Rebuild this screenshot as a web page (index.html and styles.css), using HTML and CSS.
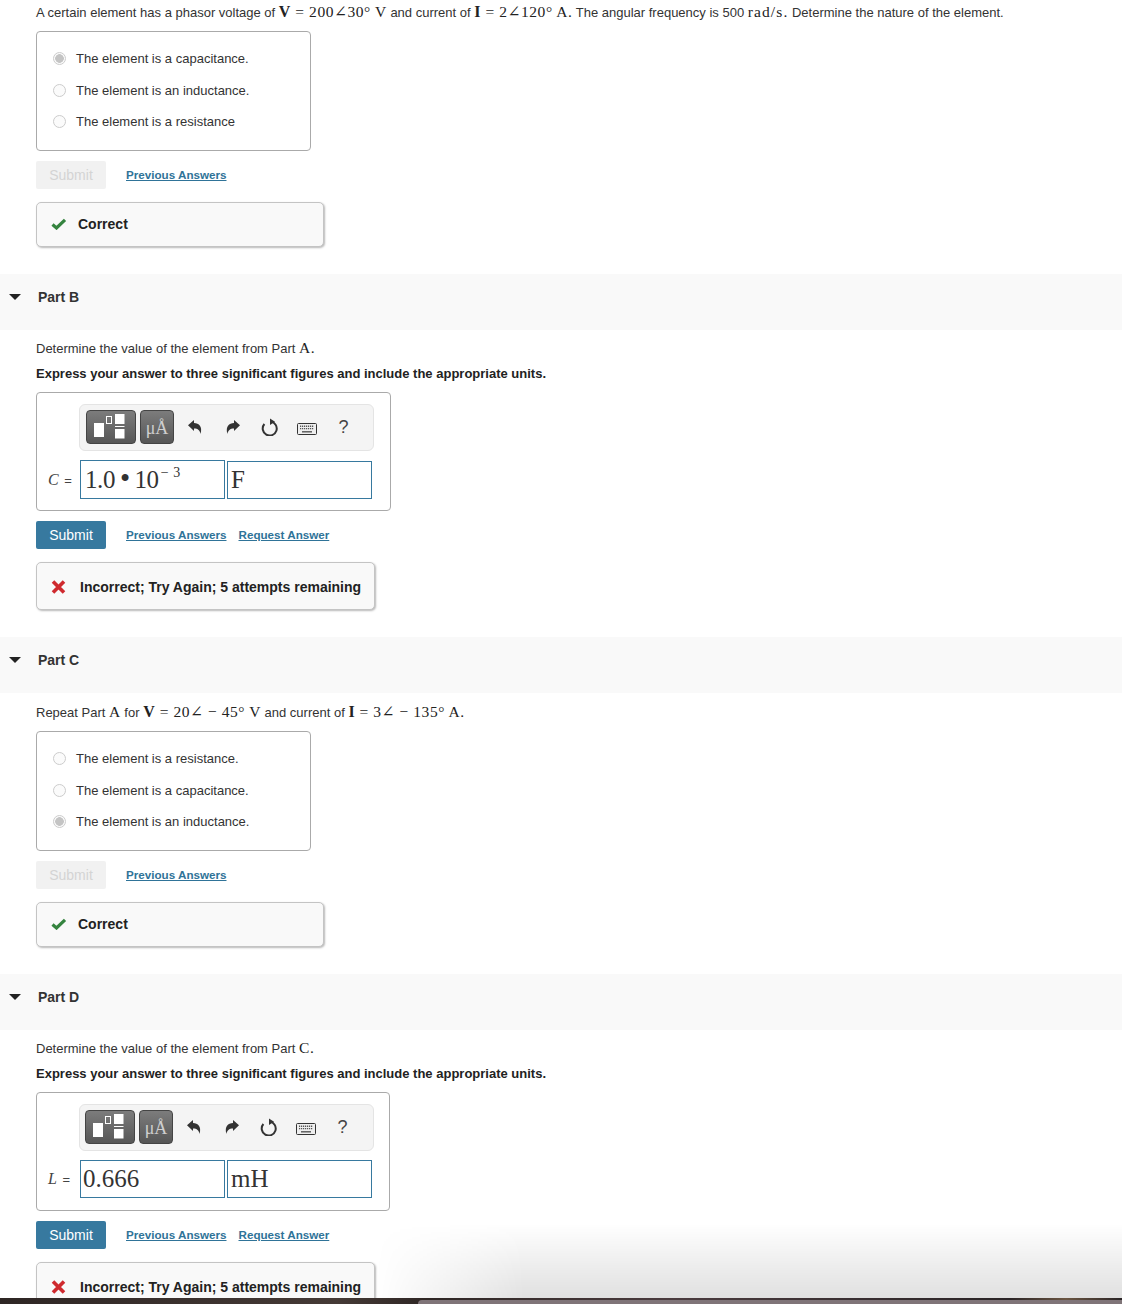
FILE: index.html
```html
<!DOCTYPE html>
<html lang="en">
<head>
<meta charset="utf-8">
<title>Phasor element problem</title>
<link rel="stylesheet" href="styles.css">
</head>
<body>
<div class="shade"></div>
<main class="page">
  <p class="intro">A certain element has a phasor voltage of <span class="m"><b>V</b> = 200∠30° V</span> and current of <span class="m"><b>I</b> = 2∠120° A.</span> The angular frequency is 500 <span class="m wide">rad/s.</span> Determine the nature of the element.</p>
  <div class="choices">
    <label class="opt"><span class="radio on"></span>The element is a capacitance.</label>
    <label class="opt"><span class="radio"></span>The element is an inductance.</label>
    <label class="opt"><span class="radio"></span>The element is a resistance</label>
  </div>
  <div class="actions">
    <span class="btn off">Submit</span>
    <a class="link" href="#">Previous Answers</a>
  </div>
  <div class="fb ok">
    <svg class="ico" width="16" height="12" viewBox="0 0 16 12"><path d="M1.5 6.5 L5.5 10 L14 1.8" fill="none" stroke="#35843f" stroke-width="3.2"/></svg>
    <span>Correct</span>
  </div>

  <section class="part"><svg class="caret" width="12" height="6" viewBox="0 0 12 6"><path d="M0 0H12L6 6Z" fill="#222"/></svg><h2>Part B</h2></section>
  <p class="q">Determine the value of the element from Part <span class="m">A.</span></p>
  <p class="q bold">Express your answer to three significant figures and include the appropriate units.</p>
  <div class="answer">
    <div class="tools">
      <span class="tb tmpl"><svg width="50" height="34" viewBox="0 0 50 34"><rect x="8" y="13" width="10" height="14" fill="#fff"/><rect x="20.5" y="6.5" width="5" height="7" fill="none" stroke="#fff"/><rect x="29" y="4" width="9.5" height="10" fill="#fff"/><rect x="29" y="16" width="9.5" height="1" fill="#fff"/><rect x="29" y="19" width="9.5" height="9.5" fill="#fff"/></svg></span>
      <span class="tb unit">μÅ</span>
      <span class="cell c38"><svg width="16" height="16" viewBox="0 0 16 16"><path d="M1 6.3 L7 1 V4 C12 4 15.6 7.5 13.6 15 C13 11.5 11 9.5 7 9.5 V12 Z" fill="#333"/></svg></span>
      <span class="cell c38"><svg width="16" height="16" viewBox="0 0 16 16"><path d="M15 6.3 L9 1 V4 C4 4 .4 7.5 2.4 15 C3 11.5 5 9.5 9 9.5 V12 Z" fill="#333"/></svg></span>
      <span class="cell c36"><svg width="18" height="18" viewBox="0 0 18 18"><path d="M3.4 6 A7 7 0 1 0 9.5 3.6" fill="none" stroke="#333" stroke-width="2"/><path d="M9 .5 L14 3.7 L9 7 Z" fill="#333"/></svg></span>
      <span class="cell c37"><svg class="kbd" width="20" height="12" viewBox="0 0 20 12"><rect x=".5" y=".5" width="19" height="11" rx="1" fill="#eee" stroke="#333"/><path d="M3 3.2H17M3 5.6H17" stroke="#555" stroke-width="1.4" stroke-dasharray="1.2 .8"/><path d="M5 8.8H15" stroke="#555" stroke-width="1.4"/></svg></span>
      <span class="cell c37 help">?</span>
    </div>
    <div class="inrow">
      <span class="sym"><i>C</i> =</span>
      <span class="field tall">1.0 <span class="dot">•</span> 10<sup>− 3</sup></span>
      <span class="field unitf">F</span>
    </div>
  </div>
  <div class="actions">
    <span class="btn">Submit</span>
    <a class="link" href="#">Previous Answers</a>
    <a class="link" href="#">Request Answer</a>
  </div>
  <div class="fb bad">
    <svg class="ico" width="15" height="14" viewBox="0 0 15 14"><path d="M2 1.5 L13 12.5 M13 1.5 L2 12.5" fill="none" stroke="#cf2a2f" stroke-width="3.6"/></svg>
    <span>Incorrect; Try Again; 5 attempts remaining</span>
  </div>

  <section class="part"><svg class="caret" width="12" height="6" viewBox="0 0 12 6"><path d="M0 0H12L6 6Z" fill="#222"/></svg><h2>Part C</h2></section>
  <p class="q repeat">Repeat Part <span class="m">A</span> for <span class="m"><b>V</b> = 20∠ − 45° V</span> and current of <span class="m"><b>I</b> = 3∠ − 135° A.</span></p>
  <div class="choices">
    <label class="opt"><span class="radio"></span>The element is a resistance.</label>
    <label class="opt"><span class="radio"></span>The element is a capacitance.</label>
    <label class="opt"><span class="radio on"></span>The element is an inductance.</label>
  </div>
  <div class="actions">
    <span class="btn off">Submit</span>
    <a class="link" href="#">Previous Answers</a>
  </div>
  <div class="fb ok">
    <svg class="ico" width="16" height="12" viewBox="0 0 16 12"><path d="M1.5 6.5 L5.5 10 L14 1.8" fill="none" stroke="#35843f" stroke-width="3.2"/></svg>
    <span>Correct</span>
  </div>

  <section class="part"><svg class="caret" width="12" height="6" viewBox="0 0 12 6"><path d="M0 0H12L6 6Z" fill="#222"/></svg><h2>Part D</h2></section>
  <p class="q">Determine the value of the element from Part <span class="m">C.</span></p>
  <p class="q bold">Express your answer to three significant figures and include the appropriate units.</p>
  <div class="answer narrow">
    <div class="tools">
      <span class="tb tmpl"><svg width="50" height="34" viewBox="0 0 50 34"><rect x="8" y="13" width="10" height="14" fill="#fff"/><rect x="20.5" y="6.5" width="5" height="7" fill="none" stroke="#fff"/><rect x="29" y="4" width="9.5" height="10" fill="#fff"/><rect x="29" y="16" width="9.5" height="1" fill="#fff"/><rect x="29" y="19" width="9.5" height="9.5" fill="#fff"/></svg></span>
      <span class="tb unit">μÅ</span>
      <span class="cell c38"><svg width="16" height="16" viewBox="0 0 16 16"><path d="M1 6.3 L7 1 V4 C12 4 15.6 7.5 13.6 15 C13 11.5 11 9.5 7 9.5 V12 Z" fill="#333"/></svg></span>
      <span class="cell c38"><svg width="16" height="16" viewBox="0 0 16 16"><path d="M15 6.3 L9 1 V4 C4 4 .4 7.5 2.4 15 C3 11.5 5 9.5 9 9.5 V12 Z" fill="#333"/></svg></span>
      <span class="cell c36"><svg width="18" height="18" viewBox="0 0 18 18"><path d="M3.4 6 A7 7 0 1 0 9.5 3.6" fill="none" stroke="#333" stroke-width="2"/><path d="M9 .5 L14 3.7 L9 7 Z" fill="#333"/></svg></span>
      <span class="cell c37"><svg class="kbd" width="20" height="12" viewBox="0 0 20 12"><rect x=".5" y=".5" width="19" height="11" rx="1" fill="#eee" stroke="#333"/><path d="M3 3.2H17M3 5.6H17" stroke="#555" stroke-width="1.4" stroke-dasharray="1.2 .8"/><path d="M5 8.8H15" stroke="#555" stroke-width="1.4"/></svg></span>
      <span class="cell c37 help">?</span>
    </div>
    <div class="inrow">
      <span class="sym"><i>L</i> =</span>
      <span class="field">0.666</span>
      <span class="field unitf">mH</span>
    </div>
  </div>
  <div class="actions">
    <span class="btn">Submit</span>
    <a class="link" href="#">Previous Answers</a>
    <a class="link" href="#">Request Answer</a>
  </div>
  <div class="fb bad">
    <svg class="ico" width="15" height="14" viewBox="0 0 15 14"><path d="M2 1.5 L13 12.5 M13 1.5 L2 12.5" fill="none" stroke="#cf2a2f" stroke-width="3.6"/></svg>
    <span>Incorrect; Try Again; 5 attempts remaining</span>
  </div>
</main>
<div class="desk"><div class="win"></div></div>
</body>
</html>
```
FILE: styles.css
```css
* { box-sizing: border-box; }
html, body { margin: 0; padding: 0; height: 1304px; overflow: hidden; background: #fff; }
body { position: relative; font-family: "Liberation Sans", Arial, sans-serif; font-size: 13px; color: #333; }
.page { position: relative; }
p { margin: 0; }
.intro { height: 24px; line-height: 23px; padding-left: 36px; white-space: nowrap; }
.m { font-family: "Liberation Serif", "DejaVu Serif", serif; font-size: 15.5px; letter-spacing: .55px; color: #222; }
.m.wide { letter-spacing: 1.1px; }
.m b { font-size: 16px; }
.choices { width: 275px; height: 120px; margin: 7px 0 0 36px; padding: 11px 0 0 16px; border: 1px solid #aaa; border-radius: 4px; background: #fff; }
.repeat + .choices { margin-top: 9px; }
.opt { display: flex; align-items: center; height: 31.5px; gap: 10px; white-space: nowrap; }
.radio { width: 13px; height: 13px; border-radius: 50%; border: 1px solid #ccc; background: #fbfbfb; flex: none; }
.radio.on { background: #fbfbfb radial-gradient(circle, #c4c4c4 0, #c4c4c4 4px, transparent 4.6px); }
.actions { display: flex; align-items: center; height: 28px; margin: 10px 0 0 36px; gap: 12px; }
.btn { width: 70px; height: 28px; margin-right: 8px; line-height: 28px; text-align: center; font-size: 14px; color: #fff; background: #37799f; border-radius: 2px; }
.btn.off { color: #d4d4d4; background: #f1f1f1; }
.link { padding-bottom: 2px; font-size: 11.65px; font-weight: 700; color: #2f7398; text-decoration: underline; }
.fb { display: flex; align-items: center; margin: 13px 0 0 36px; background: #f9f9f9; border: 1px solid #c4c4c4; border-radius: 5px; box-shadow: 1px 1px 2px rgba(0,0,0,.28); font-size: 14px; font-weight: 700; color: #222; }
.ok { width: 288px; height: 45px; padding: 0 0 1px 14px; gap: 11px; }
.bad { width: 339px; height: 48px; padding: 1px 0 0 14px; gap: 14px; }
.part { display: flex; align-items: center; height: 56px; margin-top: 27px; padding: 0 0 10px 9px; background: #f9f9f9; }
.caret { margin-right: 17px; margin-top: -1px; }
h2 { margin: 0; font-size: 14px; font-weight: 700; color: #333; }
.q { height: 20px; line-height: 20px; margin: 8px 0 0 36px; white-space: nowrap; }
.q.bold { margin-top: 5px; line-height: 22px; font-weight: 700; color: #222; }
.q.repeat { margin-top: 9px; }
.answer { width: 355px; height: 119px; margin: 9px 0 0 36px; padding: 11px 0 0 42px; border: 1px solid #aaa; border-radius: 4px; }
.answer.narrow { width: 354px; }
.tools { display: flex; align-items: center; width: 295px; height: 47px; padding: 0 0 2px 6px; background: #f4f4f4; border: 1px solid #e4e4e4; border-radius: 6px; }
.narrow .tools { padding-left: 5px; }
.tb { display: block; height: 34px; border: 1px solid #444; border-radius: 4px; background: linear-gradient(#7c7c7c, #565656); flex: none; }
.tmpl { width: 50px; }
.tmpl svg { display: block; margin: -1px; }
.unit { width: 34px; margin-left: 4px; line-height: 34px; text-align: center; font-family: "Liberation Serif", serif; font-size: 18px; color: #cfcfcf; }
.cell { display: flex; align-items: center; justify-content: center; height: 34px; flex: none; }
.c38 { width: 38px; }
.c36 { width: 36px; }
.c37 { width: 37px; }
.unit + .c38 { margin-left: 2px; }
.kbd { margin-top: 4px; }
.help { padding-top: 2px; font-family: "Liberation Sans", sans-serif; font-size: 18px; color: #444; }
.inrow { display: flex; align-items: flex-end; margin: 9px 0 0 -31px; height: 39px; }
.narrow .inrow { height: 38px; }
.sym { width: 32px; align-self: center; font-size: 13px; color: #444; white-space: nowrap; word-spacing: 2px; }
.sym i { font-family: "Liberation Serif", serif; font-size: 16px; }
.field { display: block; width: 145px; height: 38px; line-height: 36px; padding-left: 2px; border: 1px solid #37799f; font-family: "Liberation Serif", serif; font-size: 25px; color: #333; white-space: nowrap; }
.field.tall { height: 39px; line-height: 38px; padding-left: 4px; letter-spacing: -.4px; word-spacing: -1px; }
.dot { font-size: 29px; line-height: 0; }
.unitf { margin-left: 2px; padding-left: 3px; }
.field sup { font-size: 14px; line-height: 0; margin-left: 2px; position: relative; top: -2px; letter-spacing: 0; word-spacing: 1px; }
.shade { position: absolute; left: 375px; right: 0; top: 1215px; height: 83px; background: linear-gradient(rgba(0,0,0,0) 10%, rgba(0,0,0,.12)); -webkit-mask-image: linear-gradient(to right, transparent, #000 20%); mask-image: linear-gradient(to right, transparent, #000 20%); }
.desk { position: absolute; left: 0; right: 0; top: 1298px; height: 6px; background: linear-gradient(to right, #2e2624 0, #453a36 30%, #2e2624 38%, #4a3b3e 60%, #2a2426 90%, #6a5542 95%, #2a2426 100%); }
.win { position: absolute; left: 418px; right: 0; top: 2px; bottom: 0; background: #7f7478; border-radius: 6px 0 0 0; }
```
